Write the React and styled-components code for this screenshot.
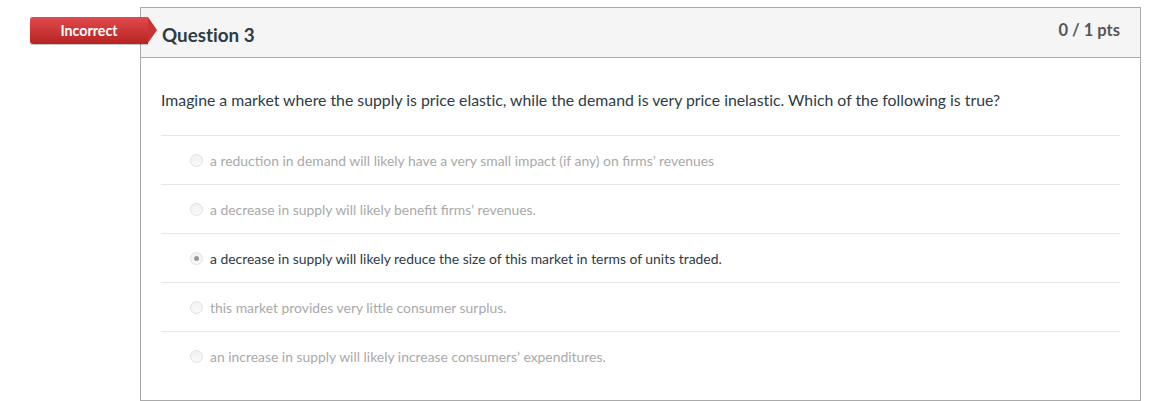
import React from "react";
import styled, { createGlobalStyle } from "styled-components";

const Global = createGlobalStyle`
  html, body { margin: 0; padding: 0; background: #fff; }
  body { font-family: Lato, "Open Sans", "Liberation Sans", sans-serif; }
`;

const Page = styled.div`
  width: 1171px;
  height: 401px;
  display: flex;
  align-items: flex-start;
  padding-top: 7px;
  padding-left: 30px;
  box-sizing: border-box;
`;

const BadgeCol = styled.div`
  width: 110px;
  padding-top: 10px;
  flex: none;
  position: relative;
  z-index: 2;
`;

const Badge = styled.div`
  position: relative;
  width: 118px;
  height: 27px;
  border-radius: 3px 0 0 3px;
  background: linear-gradient(#e04b4b, #b72323);
  box-shadow: 0 1px 1px rgba(0,0,0,0.25);
  color: #fff;
  font-weight: 700;
  font-size: 14.2px;
  line-height: 27px;
  text-align: center;
  &::after {
    content: "";
    position: absolute;
    right: -9px;
    top: 0;
    border-top: 13.5px solid transparent;
    border-bottom: 13.5px solid transparent;
    border-left: 9px solid #c93333;
  }
`;

const Card = styled.div`
  width: 1001px;
  height: 394px;
  box-sizing: border-box;
  border: 1px solid #aaa;
  flex: none;
  display: flex;
  flex-direction: column;
`;

const Header = styled.div`
  height: 50px;
  box-sizing: border-box;
  background: #f5f5f5;
  border-bottom: 1px solid #aaa;
  display: flex;
  justify-content: space-between;
  align-items: flex-start;
  padding: 0 20px 0 21px;
`;

const Title = styled.h2`
  margin: 0;
  padding-top: 16px;
  font-size: 18.8px;
  font-weight: 700;
  color: #2d3b45;
  line-height: 22px;
  font-variant-ligatures: none;
  font-feature-settings: "liga" 0, "clig" 0, "calt" 0, "dlig" 0;
`;

const Points = styled.div`
  padding-top: 12px;
  font-size: 16.5px;
  font-weight: 700;
  color: #555;
  line-height: 20px;
`;

const Body = styled.div`
  padding: 0 20px;
`;

const QuestionText = styled.p`
  margin: 0;
  padding-top: 33px;
  padding-bottom: 26px;
  font-size: 15.8px;
  line-height: 18px;
  color: #2d3b45;
  border-bottom: 1px solid #e8e8e8;
  font-variant-ligatures: none;
  font-feature-settings: "liga" 0, "clig" 0, "calt" 0, "dlig" 0;
`;

const Answer = styled.div`
  height: 48px;
  display: flex;
  align-items: center;
  padding-left: 29px;
  border-bottom: ${(p) => (p.$last ? "none" : "1px solid #e8e8e8")};
  font-size: 13.9px;
  color: ${(p) => (p.$selected ? "#2d3b45" : "#a9a9a9")};
`;

const Radio = styled.span`
  width: 11px;
  height: 11px;
  border-radius: 50%;
  border: 1px solid #e0e0e0;
  background: linear-gradient(#f2f2f2, #fafafa);
  margin-right: 7px;
  flex: none;
  display: flex;
  align-items: center;
  justify-content: center;
  &::after {
    content: "";
    width: 5px;
    height: 5px;
    border-radius: 50%;
    background: ${(p) => (p.$checked ? "#9a9a9a" : "transparent")};
  }
`;

const answers = [
  "a reduction in demand will likely have a very small impact (if any) on firms’ revenues",
  "a decrease in supply will likely benefit firms’ revenues.",
  "a decrease in supply will likely reduce the size of this market in terms of units traded.",
  "this market provides very little consumer surplus.",
  "an increase in supply will likely increase consumers’ expenditures.",
];

export default function App() {
  return (
    <>
      <Global />
      <Page>
        <BadgeCol>
          <Badge>Incorrect</Badge>
        </BadgeCol>
        <Card>
          <Header>
            <Title>Question 3</Title>
            <Points>0 / 1 pts</Points>
          </Header>
          <Body>
            <QuestionText>
              Imagine a market where the supply is price elastic, while the demand is very price inelastic. Which of the following is true?
            </QuestionText>
            {answers.map((a, i) => (
              <Answer key={i} $selected={i === 2} $last={i === answers.length - 1}>
                <Radio $checked={i === 2} />
                {a}
              </Answer>
            ))}
          </Body>
        </Card>
      </Page>
    </>
  );
}
